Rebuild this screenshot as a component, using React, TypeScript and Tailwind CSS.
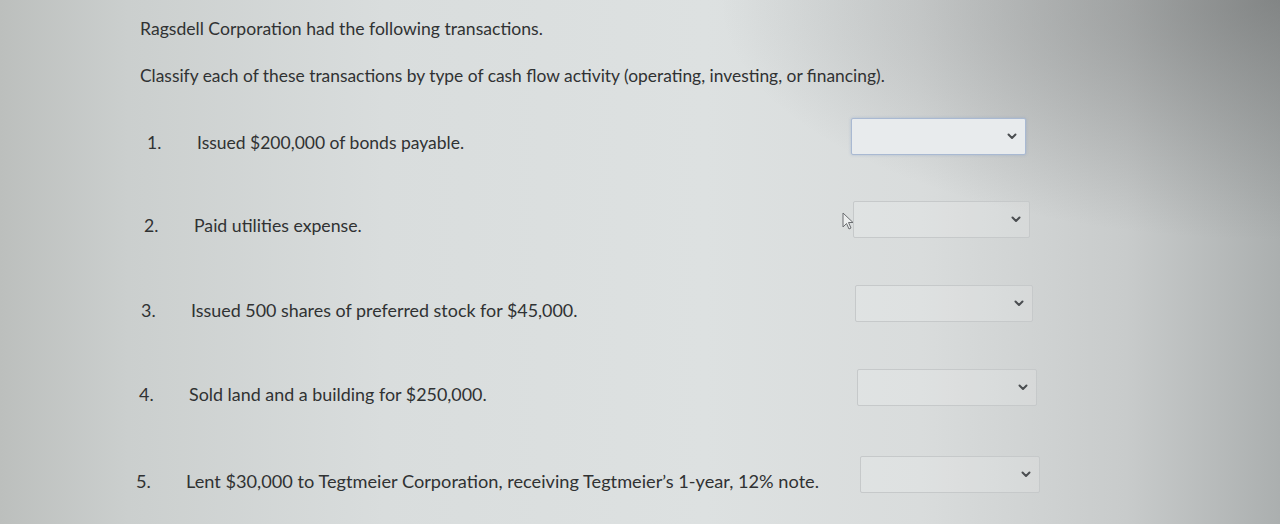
import React from "react";

interface Transaction {
  num: string;
  text: string;
  rowClass: string; // nudges from the photo's slight skew
  leftClass: string;
  boxClass: string;
}

const transactions: Transaction[] = [
  { num: "1.", text: "Issued $200,000 of bonds payable.", rowClass: "ml-[11px] mt-[30px] text-[17.5px]", leftClass: "w-[704px]", boxClass: "w-[175px] border-[#a9b9d2] bg-[#e8ebed] shadow-[0_0_3px_rgba(120,150,200,0.45)]" },
  { num: "2.", text: "Paid utilities expense.", rowClass: "ml-[8px] mt-[46px] text-[17.7px]", leftClass: "w-[709px]", boxClass: "w-[177px] border-[#c6c9ca] bg-white/15" },
  { num: "3.", text: "Issued 500 shares of preferred stock for $45,000.", rowClass: "ml-[5px] mt-[47px] text-[17.9px]", leftClass: "w-[714px]", boxClass: "w-[178px] border-[#c6c9ca] bg-white/15" },
  { num: "4.", text: "Sold land and a building for $250,000.", rowClass: "ml-[3px] mt-[47px] text-[17.9px]", leftClass: "w-[718px]", boxClass: "w-[180px] border-[#c6c9ca] bg-white/15" },
  { num: "5.", text: "Lent $30,000 to Tegtmeier Corporation, receiving Tegtmeier’s 1-year, 12% note.", rowClass: "ml-[0px] mt-[50px] text-[18.2px]", leftClass: "w-[724px]", boxClass: "w-[180px] border-[#c6c9ca] bg-white/15" },
];

const Chevron = () => (
  <svg width="10" height="7" viewBox="0 0 10 7" className="text-[#4a4d50]">
    <path d="M1.5 1.5 L5 5 L8.5 1.5" fill="none" stroke="currentColor" strokeWidth="2" strokeLinecap="round" strokeLinejoin="round" />
  </svg>
);

const Cursor = () => (
  <svg width="14" height="20" viewBox="0 0 14 20" className="absolute left-[842px] top-[212px]">
    <path d="M1 1 L1 15 L4.5 11.5 L7 17 L9 16 L6.5 10.5 L11 10.5 Z" fill="#eceeee" stroke="#6a6d70" strokeWidth="1" strokeLinejoin="round" />
  </svg>
);

export default function App() {
  return (
    <div className="relative h-[524px] w-[1280px] overflow-hidden bg-[radial-gradient(ellipse_560px_240px_at_100%_0%,rgba(90,92,92,0.5),rgba(90,92,92,0)),linear-gradient(90deg,#bcbfbd_0%,#cbcfce_10%,#d9dddd_30%,#dde1e1_55%,#d9dcdc_72%,#c8cbcb_88%,#abafaf_100%)] font-['Lato','Liberation_Sans',sans-serif] text-[17.6px] text-[#303233]">
      <div className="pl-[140px] pt-[17px]">
        <p className="leading-[24px]">Ragsdell Corporation had the following transactions.</p>
        <p className="mt-[23px] text-[17.4px] leading-[24px]">
          Classify each of these transactions by type of cash flow activity (operating, investing, or financing).
        </p>
      </div>
      <div className="pl-[136px]">
        {transactions.map((t) => (
          <div key={t.num} className={`flex h-[37px] items-start ${t.rowClass}`}>
            <div className={`flex shrink-0 pt-[13px] leading-[24px] ${t.leftClass}`}>
              <span className="w-[50px] shrink-0">{t.num}</span>
              <span>{t.text}</span>
            </div>
            <div className={`flex h-[37px] shrink-0 items-center justify-end rounded-[2px] border pr-[8px] ${t.boxClass}`}>
              <Chevron />
            </div>
          </div>
        ))}
      </div>
      <Cursor />
    </div>
  );
}
